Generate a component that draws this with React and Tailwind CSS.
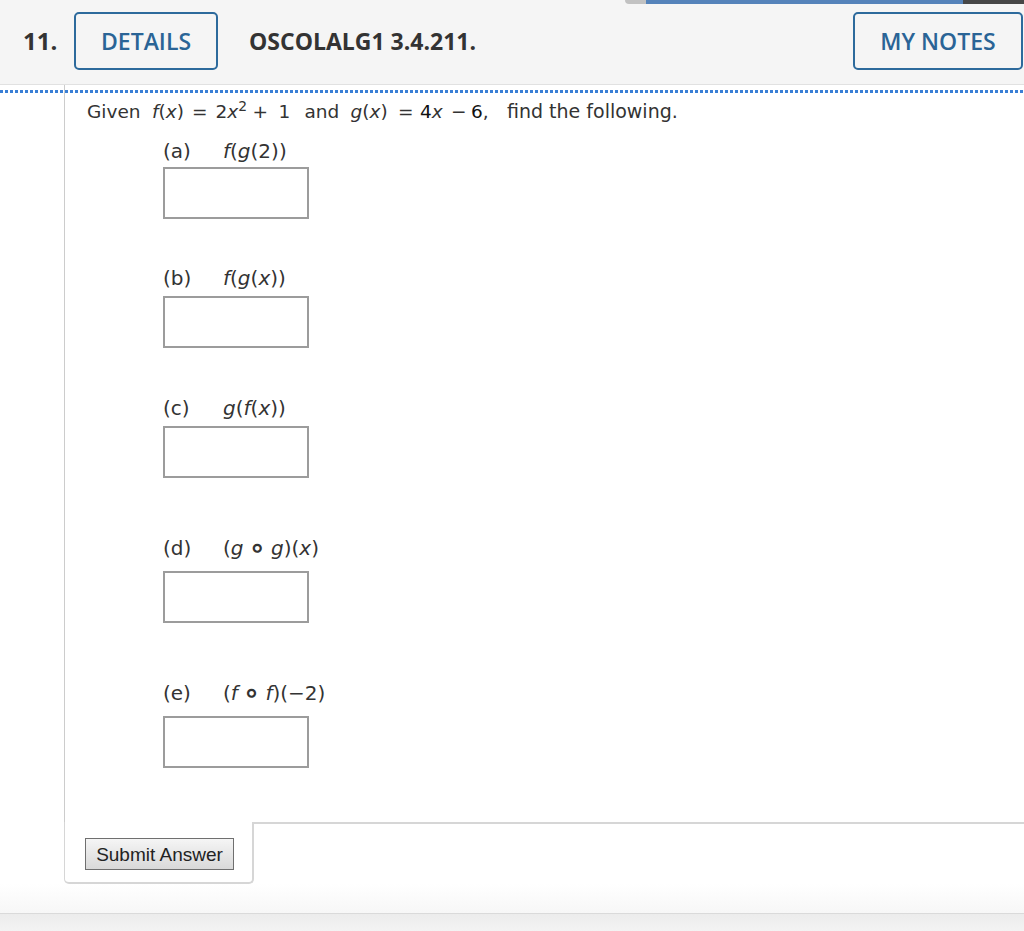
import React from "react";

function Tok({ w, children, className = "" }) {
  return (
    <span className={"inline-block whitespace-pre " + className} style={w ? { width: w } : undefined}>
      {children}
    </span>
  );
}

function Ring() {
  return <span className="inline-block text-[28px] font-bold leading-[0] align-[-2px] mx-[5px]">∘</span>;
}

function Part({ label, expr, wrapClass, boxClass }) {
  return (
    <div className={wrapClass}>
      <div className="flex h-[20px] items-center leading-[20px] text-[20px]">
        <span className="w-[60px]">{label}</span>
        <span className="whitespace-pre">{expr}</span>
      </div>
      <div className={"w-[146px] h-[52px] border-2 border-[#9c9c9c] bg-white " + boxClass} />
    </div>
  );
}

export default function App() {
  return (
    <div className="min-h-[931px] flex flex-col bg-white">
      {/* header */}
      <header className="h-[85px] bg-[#f5f5f5] border-b border-[#e1e1e1] flex flex-col font-['Open_Sans',sans-serif]">
        <div className="h-[4px] flex pl-[625px]">
          <div className="w-[21px] bg-[#c2c2c2] rounded-bl-[6px]" />
          <div className="w-[317px] bg-[#5583ba]" />
          <div className="flex-1 bg-[#474747]" />
        </div>
        <div className="mt-[8px] h-[58px] flex items-center pl-[23px] pr-[1px]">
          <span className="w-[51px] text-[24px] font-bold text-[#333]">11.</span>
          <button className="w-[144px] h-[58px] border-2 border-[#2d6a9c] rounded-[5px] text-[23px] font-semibold text-[#2a6496] bg-transparent">
            DETAILS
          </button>
          <span className="ml-[31px] text-[23px] font-bold text-[#333]">OSCOLALG1 3.4.211.</span>
          <button className="ml-auto w-[170px] h-[58px] border-2 border-[#2d6a9c] rounded-[5px] text-[23px] font-semibold text-[#2a6496] bg-transparent">
            MY NOTES
          </button>
        </div>
      </header>

      {/* body */}
      <div className="relative flex-1 flex flex-col">
        <div className="absolute left-0 right-0 top-[5px] h-[3px] bg-[repeating-linear-gradient(90deg,#3a7fd5_0_3px,transparent_3px_5px)]" />

        <div className="ml-[64px] border-l border-[#cccccc] pl-[22px] pt-[14px] pb-[54px] font-['DejaVu_Sans',sans-serif] text-[18.5px] text-[#333]">
          <div className="h-[24px] leading-[24px] whitespace-nowrap">
            <Tok w="65px">Given</Tok>
            <Tok w="40px"><i>f</i>(<i>x</i>)</Tok>
            <Tok w="23.5px">=</Tok>
            <Tok w="37px">2<i>x</i><sup>2</sup></Tok>
            <Tok w="26px">+</Tok>
            <Tok w="26px">1</Tok>
            <Tok w="46px">and</Tok>
            <Tok w="47.5px"><i>g</i>(<i>x</i>)</Tok>
            <Tok w="22px">=</Tok>
            <Tok w="31px"><span className="text-[#111]">4</span><i>x</i></Tok>
            <Tok w="20px">−</Tok>
            <Tok w="36px"><span className="text-[#111]">6</span>,</Tok>
            <Tok className="text-[19px]">find the following.</Tok>
          </div>

          <div className="ml-[76px] flex flex-col">
            <Part
              wrapClass="mt-[18px]"
              boxClass="mt-[6px]"
              label="(a)"
              expr={<><i>f</i>(<i>g</i>(2))</>}
            />
            <Part
              wrapClass="mt-[49px]"
              boxClass="mt-[8px]"
              label="(b)"
              expr={<><i>f</i>(<i>g</i>(<i>x</i>))</>}
            />
            <Part
              wrapClass="mt-[50px]"
              boxClass="mt-[8px]"
              label="(c)"
              expr={<><i>g</i>(<i>f</i>(<i>x</i>))</>}
            />
            <Part
              wrapClass="mt-[60px]"
              boxClass="mt-[13px]"
              label="(d)"
              expr={<>(<i>g</i><Ring /><i>g</i>)(<i>x</i>)</>}
            />
            <Part
              wrapClass="mt-[60px]"
              boxClass="mt-[13px]"
              label="(e)"
              expr={<>(<i>f</i><Ring /><i>f</i>)(−2)</>}
            />
          </div>
        </div>

        <div className="ml-[64px] h-[62px] flex">
          <div className="w-[190px] border-l border-r-2 border-b-2 border-[#d6d6d6] rounded-b-[5px] pl-[20px] pt-[16px]">
            <button className="w-[149px] h-[32px] border border-[#6f6f6f] bg-gradient-to-b from-[#f5f5f5] to-[#d9d9d9] text-[19px] text-[#222] font-['Liberation_Sans',Arial,sans-serif] leading-none">
              Submit Answer
            </button>
          </div>
          <div className="flex-1 border-t-2 border-[#d6d6d6]" />
        </div>

        <div className="h-[29px] bg-gradient-to-b from-white to-[#f7f7f7]" />
        <div className="flex-1 border-t border-[#dadada] bg-gradient-to-b from-[#ececec] to-[#f3f3f3]" />
      </div>
    </div>
  );
}
